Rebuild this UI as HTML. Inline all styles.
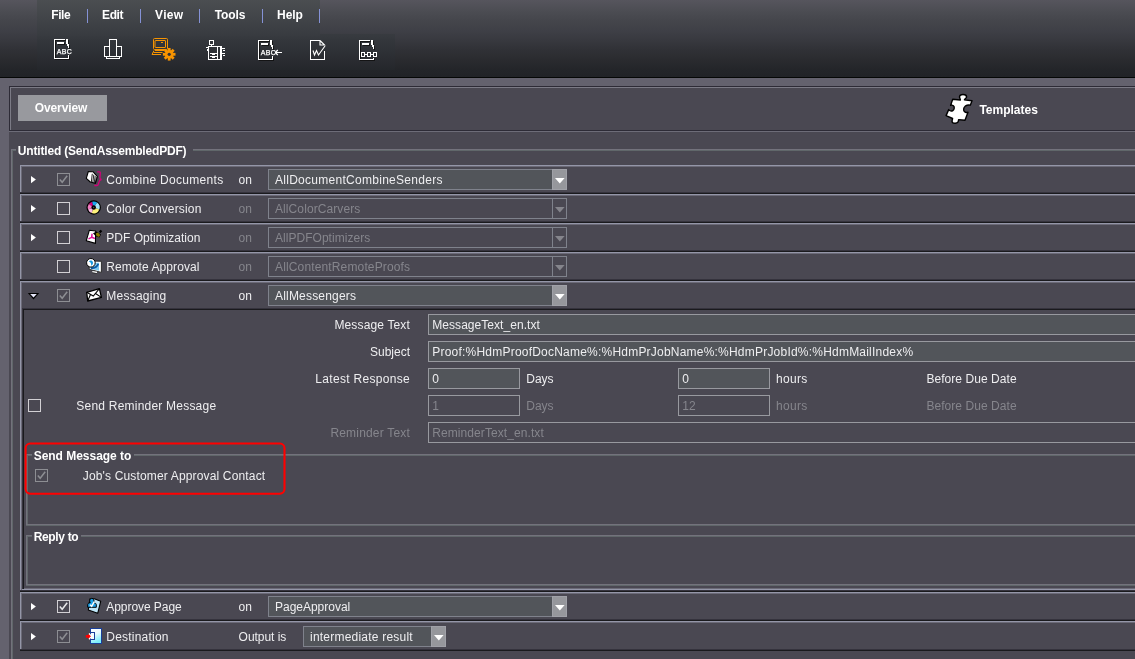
<!DOCTYPE html>
<html lang="en"><head><meta charset="utf-8"><title>Sequence Template</title><style>
html,body{margin:0;padding:0;background:#4a4852;}
body{width:1135px;height:659px;overflow:hidden;position:relative;font-family:"Liberation Sans",sans-serif;}
#root{position:absolute;left:0;top:0;width:1135px;height:659px;overflow:hidden;background:#4a4852;}
#root div,#root span,#root svg{position:absolute;}
#txt{left:0;top:0;width:1135px;height:659px;will-change:transform;}
.t{white-space:pre;line-height:14px;font-size:12px;}
.topbar{left:0;top:0;width:1135px;height:77px;background:linear-gradient(to bottom,#56555d 0px,#4b4c52 12px,#45464c 20px,#3f4047 30px,#38393f 40px,#303136 50px,#2a2b2f 60px,#232529 70px,#212327 77px);}
.menubg{left:37px;top:0;width:283px;height:70px;background:linear-gradient(to bottom,#4b4e51 0px,#43464a 15px,#393c41 34px,#34373c 40px,#2a2c31 60px,#24272b 70px);}
.toolbg{left:320px;top:34px;width:75px;height:36px;background:linear-gradient(to bottom,#383b40 0px,#34373c 6px,#2a2c31 26px,#24272b 36px);}
</style></head><body><div id="root">
<div class="topbar"></div>
<div class="menubg"></div>
<div class="toolbg"></div>
<div style="left:0px;top:77px;width:1135px;height:1px;background:#050706;"></div>
<div style="left:0px;top:78px;width:1135px;height:8px;background:#64626e;"></div>
<div style="left:0px;top:78px;width:9px;height:581px;background:#64626e;"></div>
<div style="left:87px;top:9px;width:1px;height:14px;background:#8592d6;"></div>
<div style="left:140px;top:9px;width:1px;height:14px;background:#8592d6;"></div>
<div style="left:199px;top:9px;width:1px;height:14px;background:#8592d6;"></div>
<div style="left:262px;top:9px;width:1px;height:14px;background:#8592d6;"></div>
<div style="left:319px;top:9px;width:1px;height:14px;background:#8592d6;"></div>
<svg class="ic" style="left:54px;top:39px;will-change:transform" width="32" height="23" viewBox="0 0 32 23"><g transform="translate(1,1)" fill="#111" stroke="#111" shape-rendering="crispEdges" opacity="0.850"><path d="M11 0.500H0.500V19.500H14.500V16" fill="none" stroke-width="1"/><rect x="12" y="0" width="2" height="5" stroke="none"/><rect x="13" y="5" width="2" height="1.500" stroke="none"/><rect x="14" y="6" width="1" height="3" stroke="none"/><rect x="3" y="3" width="7" height="2" stroke="none"/></g><g fill="#fff" stroke="#fff" shape-rendering="crispEdges"><path d="M11 0.500H0.500V19.500H14.500V16" fill="none" stroke-width="1"/><rect x="12" y="0" width="2" height="5" stroke="none"/><rect x="13" y="5" width="2" height="1.500" stroke="none"/><rect x="14" y="6" width="1" height="3" stroke="none"/><rect x="3" y="3" width="7" height="2" stroke="none"/></g><text x="2.700" y="15" font-family="Liberation Sans,sans-serif" font-size="7" fill="#fff" stroke="#fff" stroke-width="0.250" letter-spacing="0.300">ABC</text></svg>
<svg class="ic" style="left:104px;top:39px" width="20" height="21" viewBox="0 0 20 21"><g fill="none" stroke="#fff" stroke-width="1" shape-rendering="crispEdges"><rect x="5.5" y="0.5" width="7" height="17"/><path d="M5.5 7.5H0.5V17.5H17.5V7.5H12.5"/><path d="M2.5 17.5V19.5H15.5V17.5"/></g></svg>
<svg class="ic" style="left:151px;top:37px" width="27" height="26" viewBox="0 0 27 26"><g fill="none" stroke="#f89400" stroke-width="1"><rect x="2.500" y="1.500" width="14" height="11" rx="1"/><rect x="4" y="3.5" width="10.500" height="7" rx="0.5"/><path d="M10 5.5h2"/><path d="M4 13.5h9M2.500 15.500h9M1 17.500h9"/><path d="M3 13.5L1 17.5"/></g><g transform="translate(18.2,17.3)" fill="#f89400"><circle r="4.300"/><rect x="-1.400" y="-6.300" width="2.800" height="3.400" transform="rotate(0)"/><rect x="-1.400" y="-6.300" width="2.800" height="3.400" transform="rotate(45)"/><rect x="-1.400" y="-6.300" width="2.800" height="3.400" transform="rotate(90)"/><rect x="-1.400" y="-6.300" width="2.800" height="3.400" transform="rotate(135)"/><rect x="-1.400" y="-6.300" width="2.800" height="3.400" transform="rotate(180)"/><rect x="-1.400" y="-6.300" width="2.800" height="3.400" transform="rotate(225)"/><rect x="-1.400" y="-6.300" width="2.800" height="3.400" transform="rotate(270)"/><rect x="-1.400" y="-6.300" width="2.800" height="3.400" transform="rotate(315)"/><circle r="1.6" fill="#30323a"/></g></svg>
<svg class="ic" style="left:204px;top:39px" width="24" height="22" viewBox="0 0 24 22"><g fill="none" stroke="#fff" stroke-width="1" shape-rendering="crispEdges"><rect x="5.500" y="1.500" width="4" height="4"/><path d="M7.500 5.500V7.500"/><rect x="4.500" y="7.500" width="13" height="13"/><path d="M13.500 7.500V20.500M16 8v12" /><path d="M2 8.500h3M3 9.500v2"/><path d="M6 14.500h7M8 15.500h3M6 17.500h7M8 18.500h3"/><path d="M18 9.500h3M18 14.500h3M19 11.500h2M19 16.500h2"/></g></svg>
<svg class="ic" style="left:258px;top:40px;will-change:transform" width="32" height="23" viewBox="0 0 32 23"><g transform="translate(1,1)" fill="#111" stroke="#111" shape-rendering="crispEdges" opacity="0.850"><path d="M11 0.500H0.500V19.500H14.500V16" fill="none" stroke-width="1"/><rect x="12" y="0" width="2" height="5" stroke="none"/><rect x="13" y="5" width="2" height="1.500" stroke="none"/><rect x="14" y="6" width="1" height="3" stroke="none"/><rect x="3" y="3" width="7" height="2" stroke="none"/></g><g fill="#fff" stroke="#fff" shape-rendering="crispEdges"><path d="M11 0.500H0.500V19.500H14.500V16" fill="none" stroke-width="1"/><rect x="12" y="0" width="2" height="5" stroke="none"/><rect x="13" y="5" width="2" height="1.500" stroke="none"/><rect x="14" y="6" width="1" height="3" stroke="none"/><rect x="3" y="3" width="7" height="2" stroke="none"/></g><text x="2.700" y="15" font-family="Liberation Sans,sans-serif" font-size="7" fill="#fff" stroke="#fff" stroke-width="0.250" letter-spacing="0.300">ABC</text><path d="M17 12.500h7M17.300 12.500l2.500-2.500M17.300 12.500l2.500 2.500" stroke="#fff" fill="none" stroke-width="1.2"/></svg>
<svg class="ic" style="left:309px;top:39px" width="20" height="22" viewBox="0 0 20 22"><g fill="none" stroke="#fff" stroke-width="1.1"><path d="M11 1.500H1.500V20.500H15.500V12" shape-rendering="crispEdges"/><path d="M11 1.500V6H15.500L11 1.500"/><path d="M4 11.500L5.500 16L7.500 11.500L9.500 16L16 7"/></g></svg>
<svg class="ic" style="left:359px;top:40px;will-change:transform" width="32" height="23" viewBox="0 0 32 23"><g transform="translate(1,1)" fill="#111" stroke="#111" shape-rendering="crispEdges" opacity="0.850"><path d="M11 0.500H0.500V19.500H14.500V18" fill="none" stroke-width="1"/><rect x="12" y="0" width="2" height="5" stroke="none"/><rect x="13" y="5" width="2" height="1.500" stroke="none"/><rect x="14" y="6" width="1" height="3" stroke="none"/><rect x="3" y="3" width="7" height="2" stroke="none"/></g><g fill="#fff" stroke="#fff" shape-rendering="crispEdges"><path d="M11 0.500H0.500V19.500H14.500V18" fill="none" stroke-width="1"/><rect x="12" y="0" width="2" height="5" stroke="none"/><rect x="13" y="5" width="2" height="1.500" stroke="none"/><rect x="14" y="6" width="1" height="3" stroke="none"/><rect x="3" y="3" width="7" height="2" stroke="none"/></g><g fill="none" stroke="#fff" stroke-width="1" shape-rendering="crispEdges"><rect x="2.500" y="12.500" width="3" height="4"/><rect x="8.500" y="12.500" width="3" height="4"/><rect x="14.500" y="12.500" width="3" height="4"/><path d="M5.500 14.500h3M11.500 14.500h3"/></g></svg>
<div style="left:9px;top:86px;width:1130px;height:46px;background:#4a4852;"></div>
<div style="left:9px;top:86px;width:1130px;height:1px;background:#2d2b36;"></div>
<div style="left:9px;top:86px;width:1px;height:45px;background:#2d2b36;"></div>
<div style="left:10px;top:87px;width:1130px;height:1px;background:#7b7a85;"></div>
<div style="left:10px;top:87px;width:1px;height:43px;background:#7b7a85;"></div>
<div style="left:9px;top:130px;width:1130px;height:1px;background:#2d2b36;"></div>
<div style="left:9px;top:131px;width:1130px;height:1px;background:#6d6c78;"></div>
<div style="left:9px;top:132px;width:1130px;height:530px;background:#4a4852;"></div>
<div style="left:18px;top:95px;width:89px;height:26px;background:#98999e;"></div>
<svg class="ic" style="left:942px;top:91px" width="36" height="36" viewBox="0 0 36 36"><path d="M10.700 8.200L18.300 9C18.600 8 17.400 7.200 17.500 5.800C17.600 4.200 19.200 3.500 21 3.500C22.900 3.500 24.600 4.300 24.600 5.900C24.600 7.200 22.600 7.800 22.400 8.900L30 9.800L28.300 14.200C27 13.800 25 14 23.200 15.200C21.300 16.600 21.200 19.600 22.600 20.800C23.800 21.900 25.400 21.400 26 21.200L23 29.200L16.600 28.600C16.400 29.600 16.600 30.400 15.800 31.300C14.800 32.400 12 32.600 10.600 31.600C9.400 30.600 10.200 29.400 10.600 27.500L4.100 24.600L6.700 18.600C7.600 19.600 9.200 20.600 10.800 19.600C12.400 18.600 12.800 16 11.400 14.800C10.400 14 9 14.200 8.600 14.400Z" fill="#fff" stroke="#000" stroke-width="1.400" stroke-linejoin="round"/></svg>
<div style="left:11px;top:149px;width:1px;height:2000px;background:#73727c;"></div>
<div style="left:12px;top:150px;width:1px;height:1999px;background:#60676a;"></div>
<div style="left:11px;top:149px;width:5px;height:1px;background:#73727c;"></div>
<div style="left:12px;top:150px;width:4px;height:1px;background:#60676a;"></div>
<div style="left:193px;top:149px;width:1018px;height:1px;background:#73727c;"></div>
<div style="left:193px;top:150px;width:1018px;height:1px;background:#60676a;"></div>
<div style="left:20px;top:165px;width:1200px;height:1px;background:#9496a8;"></div>
<div style="left:21px;top:166px;width:1200px;height:1px;background:#6b6a77;"></div>
<div style="left:20px;top:165px;width:1px;height:28px;background:#9496a8;"></div>
<div style="left:21px;top:166px;width:1px;height:26px;background:#6b6a77;"></div>
<div style="left:20px;top:192px;width:1200px;height:1px;background:#35333d;"></div>
<div style="left:20px;top:193px;width:1200px;height:1px;background:#1a1a1d;"></div>
<svg class="ic" style="left:29px;top:173px" width="8" height="13" viewBox="0 0 8 13"><path d="M2 3L6.900 6.600L2 10.200Z" fill="#fff"/></svg>
<svg class="ic" style="left:57px;top:173px" width="13" height="13" viewBox="0 0 13 13"><rect x="0.500" y="0.500" width="12" height="12" fill="none" stroke="#8d8e93" stroke-width="1" shape-rendering="crispEdges"/><path d="M2.800 6.600L5.200 9.300L10.200 2.800" fill="none" stroke="#8d8e93" stroke-width="1.500"/></svg>
<svg class="ic" style="left:82px;top:168px" width="26" height="22" viewBox="0 0 26 22"><path d="M6.300 3.500L11 3.700L15.400 8.700L13.400 15.400L8.300 14L4.300 10.300Z" fill="#fff" stroke="#000" stroke-width="1.100" stroke-linejoin="round"/><path d="M10.300 5.800L9.300 14M11.800 6.800L10.800 14.600M13.200 8L12.200 15M14.400 9.200L13.300 15.300" stroke="#000" stroke-width="0.850"/><path d="M15.200 3.900H17.400Q18.500 3.900 18.300 5.200L17.900 9.400Q17.900 11.100 19.500 11.500Q17.600 11.900 17.200 13.500L16.300 16.300Q16 17.500 14.800 17.500H12.300" fill="none" stroke="#d4007a" stroke-width="1.300"/></svg>
<div style="left:268px;top:169px;width:299px;height:21px;background:#52555a;box-shadow:inset 0 0 0 1px #7f828c;"></div>
<div style="left:552px;top:169px;width:15px;height:21px;background:#96979c;box-shadow:inset 0 0 0 1px #a0a1a8;"></div>
<svg class="ic" style="left:555px;top:178px" width="10" height="6" viewBox="0 0 10 6"><path d="M0 0H9.600L4.800 5.400Z" fill="#ffffff"/></svg>
<div style="left:20px;top:194px;width:1200px;height:1px;background:#9496a8;"></div>
<div style="left:21px;top:195px;width:1200px;height:1px;background:#6b6a77;"></div>
<div style="left:20px;top:194px;width:1px;height:28px;background:#9496a8;"></div>
<div style="left:21px;top:195px;width:1px;height:26px;background:#6b6a77;"></div>
<div style="left:20px;top:221px;width:1200px;height:1px;background:#35333d;"></div>
<div style="left:20px;top:222px;width:1200px;height:1px;background:#1a1a1d;"></div>
<svg class="ic" style="left:29px;top:202px" width="8" height="13" viewBox="0 0 8 13"><path d="M2 3L6.900 6.600L2 10.200Z" fill="#fff"/></svg>
<svg class="ic" style="left:57px;top:202px" width="13" height="13" viewBox="0 0 13 13"><rect x="0.500" y="0.500" width="12" height="12" fill="none" stroke="#d2d0d4" stroke-width="1" shape-rendering="crispEdges"/></svg>
<svg class="ic" style="left:82px;top:197px" width="26" height="22" viewBox="0 0 26 22"><g transform="translate(11.700,10.500)"><circle r="7.200" fill="#000"/><g transform="scale(0.950)"><path d="M0 0L-5.16 -3.61A6.3 6.3 0 0 1 -1.63 -6.09Z" fill="#d4007a"/><path d="M0 0L-1.63 -6.09A6.3 6.3 0 0 1 3.61 -5.16Z" fill="#1aa8f0"/><path d="M0 0L3.61 -5.16A6.3 6.3 0 0 1 5.92 2.15Z" fill="#a8e4f8"/><path d="M0 0L5.92 2.15A6.3 6.3 0 0 1 -2.15 5.92Z" fill="#fff27a"/><path d="M0 0L-2.15 5.92A6.3 6.3 0 0 1 -5.92 2.15Z" fill="#f8bce2"/><path d="M0 0L-5.92 2.15A6.3 6.3 0 0 1 -5.16 -3.61Z" fill="#f07cc0"/></g><circle r="2.300" fill="#000"/><circle r="0.700" fill="#555"/></g></svg>
<div style="left:268px;top:198px;width:299px;height:21px;box-shadow:inset 0 0 0 1px #7f828c;"></div>
<div style="left:552px;top:198px;width:1px;height:21px;background:#7f828c;"></div>
<svg class="ic" style="left:555px;top:207px" width="10" height="6" viewBox="0 0 10 6"><path d="M0 0H9.600L4.800 5.400Z" fill="#85858c"/></svg>
<div style="left:20px;top:223px;width:1200px;height:1px;background:#9496a8;"></div>
<div style="left:21px;top:224px;width:1200px;height:1px;background:#6b6a77;"></div>
<div style="left:20px;top:223px;width:1px;height:28px;background:#9496a8;"></div>
<div style="left:21px;top:224px;width:1px;height:26px;background:#6b6a77;"></div>
<div style="left:20px;top:250px;width:1200px;height:1px;background:#35333d;"></div>
<div style="left:20px;top:251px;width:1200px;height:1px;background:#1a1a1d;"></div>
<svg class="ic" style="left:29px;top:231px" width="8" height="13" viewBox="0 0 8 13"><path d="M2 3L6.900 6.600L2 10.200Z" fill="#fff"/></svg>
<svg class="ic" style="left:57px;top:231px" width="13" height="13" viewBox="0 0 13 13"><rect x="0.500" y="0.500" width="12" height="12" fill="none" stroke="#d2d0d4" stroke-width="1" shape-rendering="crispEdges"/></svg>
<svg class="ic" style="left:82px;top:226px" width="26" height="22" viewBox="0 0 26 22"><path d="M7.300 4.300L13.700 5L13.400 17.400L4.300 14.700Z" fill="#fff" stroke="#000" stroke-width="1.100" stroke-linejoin="round"/><path d="M10 8.300L9.700 11.300L7 12.700M9.700 11.300L12.300 12.300" stroke="#e0109a" stroke-width="1.500" fill="none" stroke-linecap="round"/><path d="M11 7.200L14.500 5.500L19 8.500L17.500 11.500L14 10.500Z" fill="#000"/><path d="M13.800 7.400L16 6.600L18.200 9L17 11L14.500 10Z" fill="#8a7a00"/><path d="M17.600 6.400L19.500 4.500" stroke="#000" stroke-width="2.200"/></svg>
<div style="left:268px;top:227px;width:299px;height:21px;box-shadow:inset 0 0 0 1px #7f828c;"></div>
<div style="left:552px;top:227px;width:1px;height:21px;background:#7f828c;"></div>
<svg class="ic" style="left:555px;top:236px" width="10" height="6" viewBox="0 0 10 6"><path d="M0 0H9.600L4.800 5.400Z" fill="#85858c"/></svg>
<div style="left:20px;top:252px;width:1200px;height:1px;background:#9496a8;"></div>
<div style="left:21px;top:253px;width:1200px;height:1px;background:#6b6a77;"></div>
<div style="left:20px;top:252px;width:1px;height:28px;background:#9496a8;"></div>
<div style="left:21px;top:253px;width:1px;height:26px;background:#6b6a77;"></div>
<div style="left:20px;top:279px;width:1200px;height:1px;background:#35333d;"></div>
<div style="left:20px;top:280px;width:1200px;height:1px;background:#1a1a1d;"></div>
<svg class="ic" style="left:57px;top:260px" width="13" height="13" viewBox="0 0 13 13"><rect x="0.500" y="0.500" width="12" height="12" fill="none" stroke="#d2d0d4" stroke-width="1" shape-rendering="crispEdges"/></svg>
<svg class="ic" style="left:82px;top:255px" width="26" height="22" viewBox="0 0 26 22"><path d="M7.200 6L19.400 6.300V17.400L7.200 14.300Z" fill="#fff" stroke="#222" stroke-width="0.900"/><path d="M8.200 8L17 7.700V15.700L8.200 13.500Z" fill="#7cc8ee"/><path d="M9 13.300C13.300 13 15.500 11.500 16.300 8.700" stroke="#0a5aa8" stroke-width="1.700" fill="none"/><path d="M10.300 16.800L15 17.500" stroke="#fff" stroke-width="1.400"/><path d="M10 17.700L15 18.500" stroke="#222" stroke-width="0.700"/><circle cx="8.900" cy="7.800" r="4.300" fill="#fff" stroke="#000" stroke-width="1"/><path d="M6.800 6.500C8 5 10.500 5.300 11 7.500C11.200 9 10.200 10.300 9 10.600C9.600 8.600 8.600 7 6.800 6.500Z" fill="#1a9ae0"/></svg>
<div style="left:268px;top:256px;width:299px;height:21px;box-shadow:inset 0 0 0 1px #7f828c;"></div>
<div style="left:552px;top:256px;width:1px;height:21px;background:#7f828c;"></div>
<svg class="ic" style="left:555px;top:265px" width="10" height="6" viewBox="0 0 10 6"><path d="M0 0H9.600L4.800 5.400Z" fill="#85858c"/></svg>
<div style="left:20px;top:281px;width:1200px;height:1px;background:#9496a8;"></div>
<div style="left:21px;top:282px;width:1200px;height:1px;background:#6b6a77;"></div>
<div style="left:20px;top:281px;width:1px;height:310px;background:#9496a8;"></div>
<div style="left:21px;top:282px;width:1px;height:308px;background:#6b6a77;"></div>
<div style="left:20px;top:590px;width:1200px;height:1px;background:#35333d;"></div>
<div style="left:20px;top:591px;width:1200px;height:1px;background:#1a1a1d;"></div>
<svg class="ic" style="left:27px;top:292px" width="13" height="9" viewBox="0 0 13 9"><path d="M0.800 1H12.200L6.500 7.600Z" fill="#000"/><path d="M3.200 2H9.800L6.500 5.500Z" fill="#e6e6fa"/></svg>
<svg class="ic" style="left:57px;top:289px" width="13" height="13" viewBox="0 0 13 13"><rect x="0.500" y="0.500" width="12" height="12" fill="none" stroke="#8d8e93" stroke-width="1" shape-rendering="crispEdges"/><path d="M2.800 6.600L5.200 9.300L10.200 2.800" fill="none" stroke="#8d8e93" stroke-width="1.500"/></svg>
<svg class="ic" style="left:82px;top:284px" width="26" height="22" viewBox="0 0 26 22"><path d="M4.700 8.300L17.400 4.700L19.400 13.400L5.700 17Z" fill="#fff" stroke="#000" stroke-width="1.300" stroke-linejoin="round"/><path d="M4.700 8.300L11.300 12L17.400 4.700M5.700 17L8.500 10.500M19.400 13.400L13.500 9.500" fill="none" stroke="#000" stroke-width="1.100"/></svg>
<div style="left:268px;top:285px;width:299px;height:21px;background:#52555a;box-shadow:inset 0 0 0 1px #7f828c;"></div>
<div style="left:552px;top:285px;width:15px;height:21px;background:#96979c;box-shadow:inset 0 0 0 1px #a0a1a8;"></div>
<svg class="ic" style="left:555px;top:294px" width="10" height="6" viewBox="0 0 10 6"><path d="M0 0H9.600L4.800 5.400Z" fill="#ffffff"/></svg>
<div style="left:22px;top:308px;width:1200px;height:1px;background:#35333d;"></div>
<div style="left:22px;top:309px;width:1200px;height:1px;background:#1a1a1d;"></div>
<div style="left:22px;top:308px;width:1px;height:282px;background:#35333d;"></div>
<div style="left:23px;top:309px;width:1px;height:280px;background:#1a1a1d;"></div>
<div style="left:24px;top:588px;width:1200px;height:1px;background:#6b6a77;"></div>
<div style="left:22px;top:589px;width:1200px;height:1px;background:#9496a8;"></div>
<div style="left:428px;top:314px;width:800px;height:21px;background:#52555a;box-shadow:inset 0 0 0 1px #98999f;"></div>
<div style="left:428px;top:341px;width:800px;height:21px;background:#52555a;box-shadow:inset 0 0 0 1px #98999f;"></div>
<div style="left:428px;top:368px;width:92px;height:21px;background:#52555a;box-shadow:inset 0 0 0 1px #98999f;"></div>
<div style="left:678px;top:368px;width:92px;height:21px;background:#52555a;box-shadow:inset 0 0 0 1px #98999f;"></div>
<div style="left:428px;top:395px;width:92px;height:21px;box-shadow:inset 0 0 0 1px #98999f;"></div>
<div style="left:678px;top:395px;width:92px;height:21px;box-shadow:inset 0 0 0 1px #98999f;"></div>
<div style="left:428px;top:422px;width:800px;height:21px;box-shadow:inset 0 0 0 1px #98999f;"></div>
<svg class="ic" style="left:28px;top:399px" width="13" height="13" viewBox="0 0 13 13"><rect x="0.500" y="0.500" width="12" height="12" fill="none" stroke="#d2d0d4" stroke-width="1" shape-rendering="crispEdges"/></svg>
<div style="left:26px;top:454px;width:1px;height:72px;background:#73727c;"></div>
<div style="left:27px;top:455px;width:1px;height:71px;background:#60676a;"></div>
<div style="left:26px;top:454px;width:6px;height:1px;background:#73727c;"></div>
<div style="left:27px;top:455px;width:5px;height:1px;background:#60676a;"></div>
<div style="left:134px;top:454px;width:1092px;height:1px;background:#73727c;"></div>
<div style="left:134px;top:455px;width:1092px;height:1px;background:#60676a;"></div>
<div style="left:26px;top:524px;width:1200px;height:1px;background:#73727c;"></div>
<div style="left:26px;top:525px;width:1200px;height:1px;background:#60676a;"></div>
<svg class="ic" style="left:35px;top:469px" width="13" height="13" viewBox="0 0 13 13"><rect x="0.500" y="0.500" width="12" height="12" fill="none" stroke="#8d8e93" stroke-width="1" shape-rendering="crispEdges"/><path d="M2.800 6.600L5.200 9.300L10.200 2.800" fill="none" stroke="#8d8e93" stroke-width="1.500"/></svg>
<div style="left:26px;top:535px;width:1px;height:51px;background:#73727c;"></div>
<div style="left:27px;top:536px;width:1px;height:50px;background:#60676a;"></div>
<div style="left:26px;top:535px;width:6px;height:1px;background:#73727c;"></div>
<div style="left:27px;top:536px;width:5px;height:1px;background:#60676a;"></div>
<div style="left:81px;top:535px;width:1145px;height:1px;background:#73727c;"></div>
<div style="left:81px;top:536px;width:1145px;height:1px;background:#60676a;"></div>
<div style="left:26px;top:584px;width:1200px;height:1px;background:#73727c;"></div>
<div style="left:26px;top:585px;width:1200px;height:1px;background:#60676a;"></div>
<svg class="ic" style="left:20px;top:438px" width="272" height="62" viewBox="0 0 272 62"><rect x="5.600" y="5.550" width="258.900" height="50.150" rx="4.600" ry="4.600" fill="none" stroke="#ff0000" stroke-width="2.100"/></svg>
<div style="left:20px;top:592px;width:1200px;height:1px;background:#9496a8;"></div>
<div style="left:21px;top:593px;width:1200px;height:1px;background:#6b6a77;"></div>
<div style="left:20px;top:592px;width:1px;height:28px;background:#9496a8;"></div>
<div style="left:21px;top:593px;width:1px;height:26px;background:#6b6a77;"></div>
<div style="left:20px;top:619px;width:1200px;height:1px;background:#35333d;"></div>
<div style="left:20px;top:620px;width:1200px;height:1px;background:#1a1a1d;"></div>
<svg class="ic" style="left:29px;top:600px" width="8" height="13" viewBox="0 0 8 13"><path d="M2 3L6.900 6.600L2 10.200Z" fill="#fff"/></svg>
<svg class="ic" style="left:57px;top:600px" width="13" height="13" viewBox="0 0 13 13"><rect x="0.500" y="0.500" width="12" height="12" fill="none" stroke="#d2d0d4" stroke-width="1" shape-rendering="crispEdges"/><path d="M2.800 6.600L5.200 9.300L10.200 2.800" fill="none" stroke="#e8e8ea" stroke-width="1.500"/></svg>
<svg class="ic" style="left:82px;top:595px" width="26" height="22" viewBox="0 0 26 22"><path d="M8 3.700L12.300 3.700L18.700 6.300L15.700 18.300L6.300 15Z" fill="#bfe6f8" stroke="#000" stroke-width="1.100" stroke-linejoin="round"/><path d="M5.700 12.300V9.500C5.700 8.300 7.300 7.800 8.300 7.700C6.800 5.500 8.300 3.400 9.900 3.400C11.600 3.400 12.700 5.600 11.500 7.700C13 7.800 14.300 8.500 14.300 9.700V12.300Z" fill="#1da1e8" stroke="#000" stroke-width="1"/><path d="M8 9.700L9.700 11.300L12.300 6.700" stroke="#fff" stroke-width="1.500" fill="none"/></svg>
<div style="left:268px;top:596px;width:299px;height:21px;background:#52555a;box-shadow:inset 0 0 0 1px #7f828c;"></div>
<div style="left:552px;top:596px;width:15px;height:21px;background:#96979c;box-shadow:inset 0 0 0 1px #a0a1a8;"></div>
<svg class="ic" style="left:555px;top:605px" width="10" height="6" viewBox="0 0 10 6"><path d="M0 0H9.600L4.800 5.400Z" fill="#ffffff"/></svg>
<div style="left:20px;top:621px;width:1200px;height:1px;background:#9496a8;"></div>
<div style="left:21px;top:622px;width:1200px;height:1px;background:#6b6a77;"></div>
<div style="left:20px;top:621px;width:1px;height:29px;background:#9496a8;"></div>
<div style="left:21px;top:622px;width:1px;height:27px;background:#6b6a77;"></div>
<div style="left:20px;top:649px;width:1200px;height:1px;background:#35333d;"></div>
<div style="left:20px;top:650px;width:1200px;height:1px;background:#1a1a1d;"></div>
<svg class="ic" style="left:29px;top:630px" width="8" height="13" viewBox="0 0 8 13"><path d="M2 3L6.900 6.600L2 10.200Z" fill="#fff"/></svg>
<svg class="ic" style="left:57px;top:630px" width="13" height="13" viewBox="0 0 13 13"><rect x="0.500" y="0.500" width="12" height="12" fill="none" stroke="#8d8e93" stroke-width="1" shape-rendering="crispEdges"/><path d="M2.800 6.600L5.200 9.300L10.200 2.800" fill="none" stroke="#8d8e93" stroke-width="1.500"/></svg>
<svg class="ic" style="left:82px;top:625px" width="26" height="22" viewBox="0 0 26 22"><defs><linearGradient id="dg" x1="0" y1="0" x2="0.300" y2="1"><stop offset="0" stop-color="#fff"/><stop offset="0.450" stop-color="#e8fbff"/><stop offset="1" stop-color="#7aeefc"/></linearGradient></defs><rect x="8.500" y="3.500" width="11" height="15" fill="url(#dg)" stroke="#1a3f9a" stroke-width="1"/><rect x="8.500" y="7.500" width="4" height="7" fill="#f4ffff" stroke="#1a3f9a" stroke-width="1"/><path d="M7 8.500L9.300 11.300L7 14.200" fill="#fff" stroke="#fff" stroke-width="1.400"/><path d="M3.800 10H6.200V8.700L9 11.350L6.200 14V12.800H3.800Z" fill="#ff0000"/></svg>
<div style="left:303px;top:626px;width:143px;height:21px;background:#52555a;box-shadow:inset 0 0 0 1px #7f828c;"></div>
<div style="left:431px;top:626px;width:15px;height:21px;background:#96979c;box-shadow:inset 0 0 0 1px #a0a1a8;"></div>
<svg class="ic" style="left:434px;top:635px" width="10" height="6" viewBox="0 0 10 6"><path d="M0 0H9.600L4.800 5.400Z" fill="#ffffff"/></svg>
<div id="txt">
<span class="t" style="left:51.30px;top:7.84px;color:#ffffff;font-size:12px;letter-spacing:-0.439px;font-weight:bold;">File</span>
<span class="t" style="left:102.10px;top:7.84px;color:#ffffff;font-size:12px;letter-spacing:-0.414px;font-weight:bold;">Edit</span>
<span class="t" style="left:155.10px;top:7.84px;color:#ffffff;font-size:12px;letter-spacing:0.248px;font-weight:bold;">View</span>
<span class="t" style="left:214.70px;top:7.84px;color:#ffffff;font-size:12px;letter-spacing:-0.119px;font-weight:bold;">Tools</span>
<span class="t" style="left:277.10px;top:7.84px;color:#ffffff;font-size:12px;letter-spacing:-0.125px;font-weight:bold;">Help</span>
<span class="t" style="left:34.80px;top:100.84px;color:#ffffff;font-size:12px;letter-spacing:-0.130px;font-weight:bold;">Overview</span>
<span class="t" style="left:979.40px;top:102.84px;color:#ffffff;font-size:12px;letter-spacing:0.005px;font-weight:bold;">Templates</span>
<span class="t" style="left:17.80px;top:143.84px;color:#ffffff;font-size:12px;letter-spacing:-0.175px;font-weight:bold;">Untitled (SendAssembledPDF)</span>
<span class="t" style="left:106.30px;top:172.84px;color:#eeeef0;font-size:12px;letter-spacing:0.303px;">Combine Documents</span>
<span class="t" style="left:238.60px;top:172.84px;color:#eeeef0;font-size:12px;letter-spacing:-0.022px;">on</span>
<span class="t" style="left:275.00px;top:172.84px;color:#eeeef0;font-size:12px;letter-spacing:0.278px;">AllDocumentCombineSenders</span>
<span class="t" style="left:106.30px;top:201.84px;color:#eeeef0;font-size:12px;letter-spacing:0.155px;">Color Conversion</span>
<span class="t" style="left:238.60px;top:201.84px;color:#85858c;font-size:12px;letter-spacing:-0.022px;">on</span>
<span class="t" style="left:275.00px;top:201.84px;color:#85858c;font-size:12px;letter-spacing:0.090px;">AllColorCarvers</span>
<span class="t" style="left:106.30px;top:230.84px;color:#eeeef0;font-size:12px;">PDF Optimization</span>
<span class="t" style="left:238.60px;top:230.84px;color:#85858c;font-size:12px;letter-spacing:-0.022px;">on</span>
<span class="t" style="left:275.00px;top:230.84px;color:#85858c;font-size:12px;letter-spacing:0.032px;">AllPDFOptimizers</span>
<span class="t" style="left:106.30px;top:259.84px;color:#eeeef0;font-size:12px;letter-spacing:0.077px;">Remote Approval</span>
<span class="t" style="left:238.60px;top:259.84px;color:#85858c;font-size:12px;letter-spacing:-0.022px;">on</span>
<span class="t" style="left:275.00px;top:259.84px;color:#85858c;font-size:12px;letter-spacing:0.143px;">AllContentRemoteProofs</span>
<span class="t" style="left:106.30px;top:288.84px;color:#eeeef0;font-size:12px;letter-spacing:0.241px;">Messaging</span>
<span class="t" style="left:238.60px;top:288.84px;color:#eeeef0;font-size:12px;letter-spacing:-0.022px;">on</span>
<span class="t" style="left:275.00px;top:288.84px;color:#eeeef0;font-size:12px;letter-spacing:0.192px;">AllMessengers</span>
<span class="t" style="left:432.30px;top:317.84px;color:#eeeef0;font-size:12px;letter-spacing:0.045px;">MessageText_en.txt</span>
<span class="t" style="left:432.30px;top:344.84px;color:#eeeef0;font-size:12px;letter-spacing:0.215px;">Proof:%HdmProofDocName%:%HdmPrJobName%:%HdmPrJobId%:%HdmMailIndex%</span>
<span class="t" style="left:432.30px;top:371.84px;color:#eeeef0;font-size:12px;">0</span>
<span class="t" style="left:682.30px;top:371.84px;color:#eeeef0;font-size:12px;">0</span>
<span class="t" style="left:432.30px;top:398.84px;color:#85858c;font-size:12px;">1</span>
<span class="t" style="left:682.30px;top:398.84px;color:#85858c;font-size:12px;">12</span>
<span class="t" style="left:432.30px;top:425.84px;color:#85858c;font-size:12px;letter-spacing:0.077px;">ReminderText_en.txt</span>
<span class="t" style="left:334.40px;top:317.84px;color:#eeeef0;font-size:12px;letter-spacing:0.150px;">Message Text</span>
<span class="t" style="left:370.00px;top:344.84px;color:#eeeef0;font-size:12px;letter-spacing:-0.002px;">Subject</span>
<span class="t" style="left:315.30px;top:371.84px;color:#eeeef0;font-size:12px;letter-spacing:0.311px;">Latest Response</span>
<span class="t" style="left:330.40px;top:425.84px;color:#85858c;font-size:12px;letter-spacing:0.189px;">Reminder Text</span>
<span class="t" style="left:526.30px;top:371.84px;color:#eeeef0;font-size:12px;letter-spacing:-0.036px;">Days</span>
<span class="t" style="left:776.00px;top:371.84px;color:#eeeef0;font-size:12px;letter-spacing:0.317px;">hours</span>
<span class="t" style="left:926.40px;top:371.84px;color:#eeeef0;font-size:12px;letter-spacing:0.056px;">Before Due Date</span>
<span class="t" style="left:526.30px;top:398.84px;color:#85858c;font-size:12px;letter-spacing:-0.036px;">Days</span>
<span class="t" style="left:776.00px;top:398.84px;color:#85858c;font-size:12px;letter-spacing:0.317px;">hours</span>
<span class="t" style="left:926.40px;top:398.84px;color:#85858c;font-size:12px;letter-spacing:0.056px;">Before Due Date</span>
<span class="t" style="left:76.30px;top:398.84px;color:#eeeef0;font-size:12px;letter-spacing:0.219px;">Send Reminder Message</span>
<span class="t" style="left:33.70px;top:448.84px;color:#ffffff;font-size:12px;letter-spacing:-0.027px;font-weight:bold;">Send Message to</span>
<span class="t" style="left:82.80px;top:468.84px;color:#eeeef0;font-size:12px;letter-spacing:0.155px;">Job's Customer Approval Contact</span>
<span class="t" style="left:33.70px;top:529.84px;color:#ffffff;font-size:12px;letter-spacing:-0.341px;font-weight:bold;">Reply to</span>
<span class="t" style="left:106.30px;top:599.84px;color:#eeeef0;font-size:12px;letter-spacing:-0.061px;">Approve Page</span>
<span class="t" style="left:238.60px;top:599.84px;color:#eeeef0;font-size:12px;letter-spacing:-0.022px;">on</span>
<span class="t" style="left:275.00px;top:599.84px;color:#eeeef0;font-size:12px;letter-spacing:-0.015px;">PageApproval</span>
<span class="t" style="left:106.30px;top:629.84px;color:#eeeef0;font-size:12px;letter-spacing:0.215px;">Destination</span>
<span class="t" style="left:238.60px;top:629.84px;color:#eeeef0;font-size:12px;letter-spacing:-0.044px;">Output is</span>
<span class="t" style="left:310.00px;top:629.84px;color:#eeeef0;font-size:12px;letter-spacing:0.216px;">intermediate result</span>
</div>
</div></body></html>
